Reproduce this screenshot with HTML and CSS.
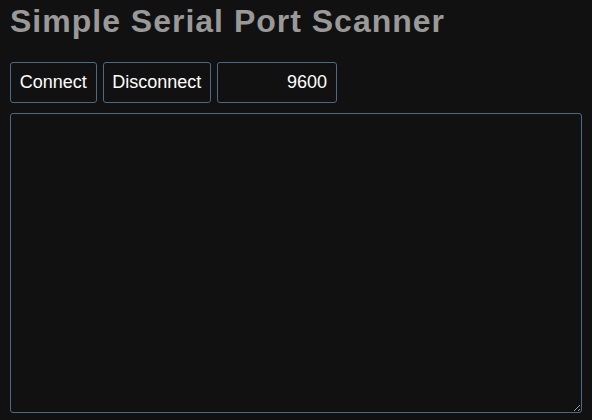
FILE: index.html
```html
<!DOCTYPE html>
<html>
<head>
<meta charset="utf-8">
<link rel="stylesheet" href="styles.css">
</head>
<body>
<h1 class="title">Simple Serial Port Scanner</h1>
<div class="controls">
  <button class="btn">Connect</button>
  <button class="btn">Disconnect</button>
  <input class="baud" type="text" value="9600">
</div>
<textarea class="log"></textarea>
</body>
</html>
```
FILE: styles.css
```css
html, body {
  margin: 0;
  background: #111111;
}
body {
  padding: 0 10px;
  font-family: "Liberation Sans", Arial, sans-serif;
  display: flex;
  flex-direction: column;
  height: 420px;
  box-sizing: border-box;
}
.title {
  margin: 3px 0 0;
  font-size: 32px;
  line-height: 36px;
  font-weight: bold;
  letter-spacing: 1px;
  color: #999999;
}
.controls {
  display: flex;
  gap: 6px;
  margin-top: 23px;
}
.btn, .baud {
  height: 41px;
  box-sizing: border-box;
  background: #111111;
  color: #ffffff;
  border: 1px solid #4a6a88;
  border-radius: 3px;
  font-family: "Liberation Sans", Arial, sans-serif;
  font-size: 18px;
  padding: 0 8.75px;
}
.baud {
  width: 120px;
  text-align: right;
  padding: 0 9px;
}
.log {
  margin-top: 10px;
  width: 572px;
  height: 300px;
  box-sizing: border-box;
  background: #111111;
  border: 1px solid #4a6a88;
  border-radius: 3px;
  color: #ffffff;
}
```
